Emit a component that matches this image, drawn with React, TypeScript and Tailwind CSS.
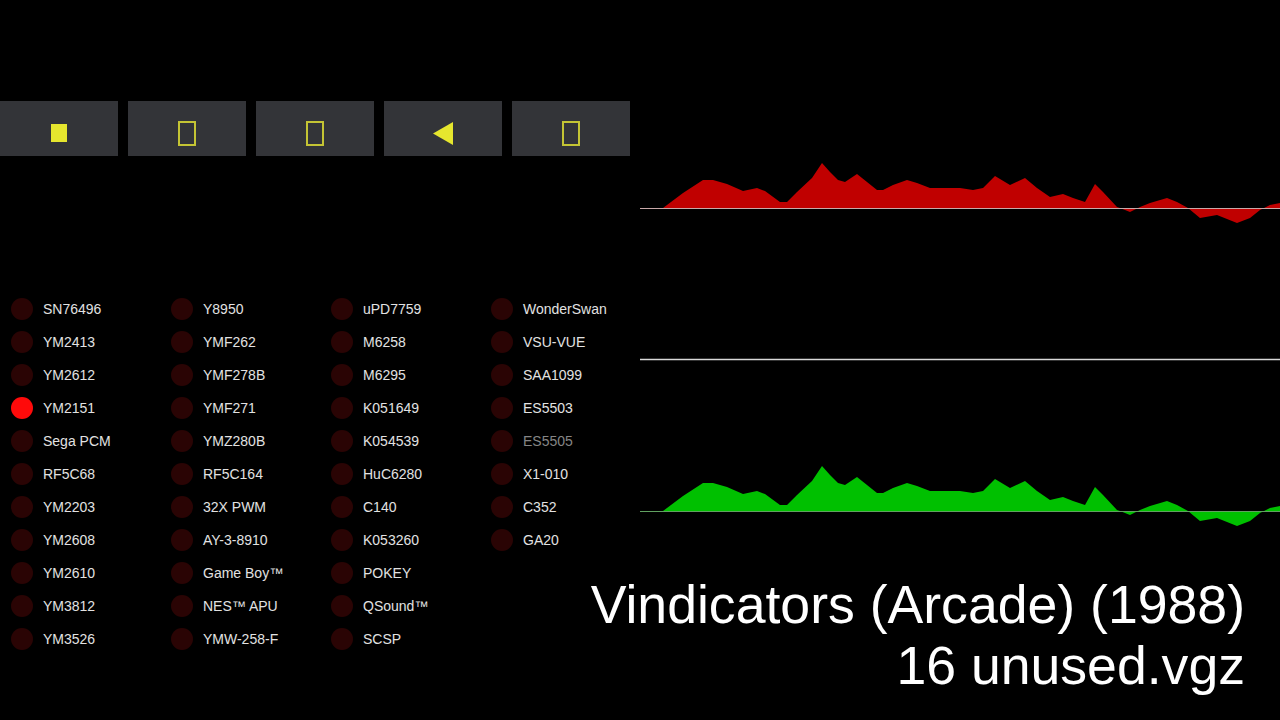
import React from "react";

type Chip = { name: string; on?: boolean; dim?: boolean };

const chips: Chip[] = [
  { name: "SN76496" }, { name: "YM2413" }, { name: "YM2612" }, { name: "YM2151", on: true },
  { name: "Sega PCM" }, { name: "RF5C68" }, { name: "YM2203" }, { name: "YM2608" },
  { name: "YM2610" }, { name: "YM3812" }, { name: "YM3526" },
  { name: "Y8950" }, { name: "YMF262" }, { name: "YMF278B" }, { name: "YMF271" },
  { name: "YMZ280B" }, { name: "RF5C164" }, { name: "32X PWM" }, { name: "AY-3-8910" },
  { name: "Game Boy™" }, { name: "NES™ APU" }, { name: "YMW-258-F" },
  { name: "uPD7759" }, { name: "M6258" }, { name: "M6295" }, { name: "K051649" },
  { name: "K054539" }, { name: "HuC6280" }, { name: "C140" }, { name: "K053260" },
  { name: "POKEY" }, { name: "QSound™" }, { name: "SCSP" },
  { name: "WonderSwan" }, { name: "VSU-VUE" }, { name: "SAA1099" }, { name: "ES5503" },
  { name: "ES5505", dim: true }, { name: "X1-010" }, { name: "C352" }, { name: "GA20" },
];

// x, offset from baseline (negative = up)
const wave: [number, number][] = [
  [0, 0], [23, 0], [43, -15], [63, -28], [73, -28], [87, -24], [103, -17], [117, -20],
  [125, -17], [140, -6], [147, -6], [157, -16], [172, -30], [182, -45], [190, -36],
  [198, -28], [205, -26], [217, -34], [227, -26], [237, -18], [243, -18], [253, -23],
  [267, -28], [277, -25], [290, -20], [320, -20], [333, -18], [343, -20], [355, -32],
  [370, -23], [385, -30], [397, -20], [410, -11], [423, -14], [433, -10], [445, -6],
  [455, -24], [463, -16], [477, -1], [480, 0], [490, 4], [500, -1], [510, -5],
  [527, -10], [537, -6], [548, 0], [560, 10], [577, 7], [597, 15], [610, 10],
  [620, 2], [630, -3], [640, -5],
];

function wavePath(base: number) {
  const pts = wave.map(([x, y]) => `L${x},${base + y}`).join(" ");
  return `M0,${base} ${pts} L640,${base} Z`;
}

function Tofu() {
  return <span className="block h-[25px] w-[18px] border-2 border-[#c4c434]" />;
}

function CtrlButton({ children }: { children: React.ReactNode }) {
  return (
    <div className="flex h-[55px] w-[118px] items-center justify-center bg-[#333438] pt-[9px]">
      {children}
    </div>
  );
}

export default function App() {
  return (
    <div className="flex h-[720px] w-[1280px] overflow-hidden bg-black font-['Liberation_Sans',Arial,sans-serif]">
      <div className="w-[640px] shrink-0 pt-[101px]">
        <div className="flex gap-[10px]">
          <CtrlButton>
            <span className="block h-[18px] w-[16px] bg-[#e6e62e]" />
          </CtrlButton>
          <CtrlButton>
            <Tofu />
          </CtrlButton>
          <CtrlButton>
            <Tofu />
          </CtrlButton>
          <CtrlButton>
            <svg width="20" height="23" viewBox="0 0 20 23">
              <polygon points="20,0 20,23 0,11.5" fill="#e6e62e" />
            </svg>
          </CtrlButton>
          <CtrlButton>
            <Tofu />
          </CtrlButton>
        </div>

        <div className="mt-[136px] grid grid-flow-col grid-cols-[repeat(4,160px)] grid-rows-[repeat(11,33px)]">
          {chips.map((c) => (
            <div key={c.name} className="flex items-center gap-[10px] pl-[11px]">
              <span
                className={`block h-[22px] w-[22px] shrink-0 rounded-full ${
                  c.on ? "bg-[#ff0a0a]" : "bg-[#2a0404]"
                }`}
              />
              <span
                className={`text-[14px] leading-none ${
                  c.dim ? "text-[#858585]" : "text-[#e2e2e2]"
                }`}
              >
                {c.name}
              </span>
            </div>
          ))}
        </div>
      </div>

      <div className="flex w-[640px] shrink-0 flex-col pt-[150px]">
        <svg width="640" height="400" viewBox="0 0 640 400" className="block">
          <path d={wavePath(58)} fill="#c00000" strokeLinejoin="round" />
          <line x1="0" y1="58.5" x2="640" y2="58.5" stroke="#c8a8a8" strokeWidth="1" />
          <line x1="0" y1="209.5" x2="640" y2="209.5" stroke="#d8d8d8" strokeWidth="1.5" />
          <path d={wavePath(361)} fill="#00c000" strokeLinejoin="round" />
          <line x1="0" y1="361.5" x2="640" y2="361.5" stroke="#60a060" strokeWidth="1" />
        </svg>
        <div className="mt-[24px] flex justify-end pr-[35px]">
          <div className="whitespace-nowrap text-right text-[53.6px] leading-[61px] text-white">
            <div>Vindicators (Arcade) (1988)</div>
            <div>16 unused.vgz</div>
          </div>
        </div>
      </div>
    </div>
  );
}
